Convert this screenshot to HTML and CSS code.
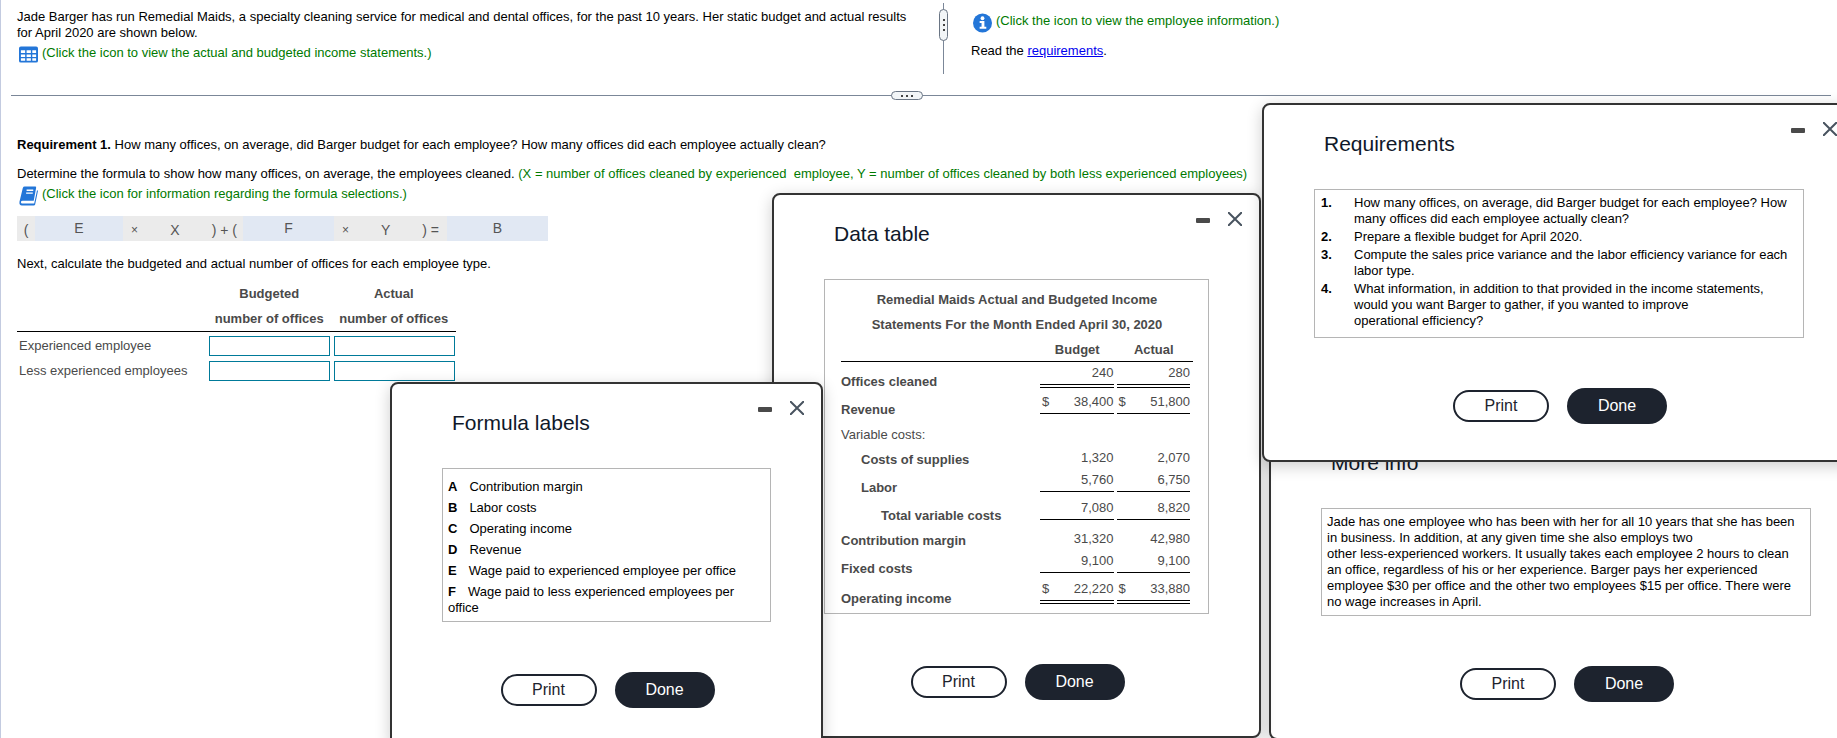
FILE: index.html
```html
<!DOCTYPE html>
<html lang="en">
<head>
  <meta charset="UTF-8">
  <meta name="viewport" content="width=device-width, initial-scale=1.0">
  <title>Remedial Maids</title>
  <link rel="stylesheet" href="styles.css">
</head>

<body>
  <main class="page">
    <section class="intro">
      <div class="intro-left">
        <p>Jade Barger has run Remedial Maids, a specialty cleaning service for medical and dental offices, for the past 10 years. Her static budget and actual results for April 2020 are shown below.</p>
        <div class="icon-line">
          <svg class="icon" viewBox="0 0 20 20">
            <rect x="0" y="1" width="20" height="17" rx="2" fill="#2376d8"/>
            <path fill="#fff" d="M2 5h4.500v3H2zM8 5h4.500v3H8zM14 5h4v3h-4zM2 9.500h4.500v2.500H2zM8 9.500h4.500v2.500H8zM14 9.500h4v2.500h-4zM2 13.500h4.500v2.500H2zM8 13.500h4.500v2.500H8zM14 13.500h4v2.500h-4z"/>
          </svg>
          <span class="green">(Click the icon to view the actual and budgeted income statements.)</span>
        </div>
      </div>
      <div class="divider">
        <span class="handle tall"><i></i><i></i><i></i></span>
      </div>
      <div class="intro-right">
        <div class="icon-line">
          <svg class="icon" viewBox="0 0 20 20">
            <circle cx="10" cy="10" r="10" fill="#2376d8"/>
            <circle cx="10" cy="5" r="2" fill="#fff"/>
            <path fill="#fff" d="M7 8h5v6h2v2H7v-2h2v-4H7z"/>
          </svg>
          <span class="green">(Click the icon to view the employee information.)</span>
        </div>
        <p>Read the <a href="#requirements">requirements</a>.</p>
      </div>
    </section>

    <div class="splitter">
      <span class="handle wide"><i></i><i></i><i></i></span>
    </div>

    <section class="question">
      <p class="lead"><b>Requirement 1.</b> How many offices, on average, did Barger budget for each employee? How many offices did each employee actually clean?</p>
      <p>Determine the formula to show how many offices, on average, the employees cleaned. <span class="green">(X = number of offices cleaned by experienced&nbsp; employee, Y = number of offices cleaned by both less experienced employees)</span></p>
      <div class="icon-line">
        <svg class="icon" viewBox="0 0 20 20">
          <path fill="#2376d8" d="M6 0h11q1.500 0 1 1.500L15.500 15H4q-2 0-2 1.500T3.500 18H16L19 4l1 .5L17 19q-.3 1-1.500 1H3Q0 20 .5 16L4 1.500Q4.500 0 6 0z"/>
          <path stroke="#fff" stroke-width="1.500" d="M8 4h7M7.500 7h7"/>
        </svg>
        <span class="green">(Click the icon for information regarding the formula selections.)</span>
      </div>

      <div class="formula">
        <span class="op paren">(</span>
        <span class="pick pick-e">E</span>
        <span class="op group-x"><span class="times">×</span><span>X</span><span>) + (</span></span>
        <span class="pick pick-f">F</span>
        <span class="op group-y"><span class="times">×</span><span>Y</span><span>) =</span></span>
        <span class="pick pick-b">B</span>
      </div>

      <p>Next, calculate the budgeted and actual number of offices for each employee type.</p>

      <table class="offices">
        <thead>
          <tr>
            <td></td>
            <th>Budgeted<br>number of offices</th>
            <th>Actual<br>number of offices</th>
          </tr>
        </thead>
        <tbody>
          <tr>
            <td>Experienced employee</td>
            <td><input type="text" aria-label="Experienced employee, budgeted"></td>
            <td><input type="text" aria-label="Experienced employee, actual"></td>
          </tr>
          <tr>
            <td>Less experienced employees</td>
            <td><input type="text" aria-label="Less experienced employees, budgeted"></td>
            <td><input type="text" aria-label="Less experienced employees, actual"></td>
          </tr>
        </tbody>
      </table>
    </section>
  </main>

  <!-- More info -->
  <section class="window more-info">
    <header>
      <h2>More info</h2>
      <div class="controls">
        <button class="minimize" aria-label="Minimize"></button>
        <button class="close" aria-label="Close"><svg viewBox="0 0 14 14"><path d="M0 0l14 14M14 0L0 14"/></svg></button>
      </div>
    </header>
    <div class="box info-text">
      Jade has one employee who has been with her for all 10 years that she has been in business. In addition, at any given time she also employs two<br>other less-experienced workers. It usually takes each employee 2 hours to clean an office, regardless of his or her experience. Barger pays her experienced employee $30 per office and the other two employees $15 per office. There were no wage increases in April.
    </div>
    <footer>
      <button class="btn print">Print</button>
      <button class="btn done">Done</button>
    </footer>
  </section>

  <!-- Data table -->
  <section class="window data-table">
    <header>
      <h2>Data table</h2>
      <div class="controls">
        <button class="minimize" aria-label="Minimize"></button>
        <button class="close" aria-label="Close"><svg viewBox="0 0 14 14"><path d="M0 0l14 14M14 0L0 14"/></svg></button>
      </div>
    </header>
    <div class="box table-box">
      <table class="income">
        <caption>Remedial Maids Actual and Budgeted Income<br>Statements For the Month Ended April 30, 2020</caption>
        <thead>
          <tr><td></td><th>Budget</th><th>Actual</th></tr>
        </thead>
        <tbody>
          <tr class="double"><th>Offices cleaned</th><td><div>240</div></td><td><div>280</div></td></tr>
          <tr class="single"><th>Revenue</th><td><div><span>$</span>38,400</div></td><td><div><span>$</span>51,800</div></td></tr>
          <tr><th class="plain">Variable costs:</th><td></td><td></td></tr>
          <tr><th class="indent">Costs of supplies</th><td><div>1,320</div></td><td><div>2,070</div></td></tr>
          <tr class="single"><th class="indent">Labor</th><td><div>5,760</div></td><td><div>6,750</div></td></tr>
          <tr class="single"><th class="indent2">Total variable costs</th><td><div>7,080</div></td><td><div>8,820</div></td></tr>
          <tr><th>Contribution margin</th><td><div>31,320</div></td><td><div>42,980</div></td></tr>
          <tr class="single"><th>Fixed costs</th><td><div>9,100</div></td><td><div>9,100</div></td></tr>
          <tr class="double"><th>Operating income</th><td><div><span>$</span>22,220</div></td><td><div><span>$</span>33,880</div></td></tr>
        </tbody>
      </table>
    </div>
    <footer>
      <button class="btn print">Print</button>
      <button class="btn done">Done</button>
    </footer>
  </section>

  <!-- Formula labels -->
  <section class="window formula-labels">
    <header>
      <h2>Formula labels</h2>
      <div class="controls">
        <button class="minimize" aria-label="Minimize"></button>
        <button class="close" aria-label="Close"><svg viewBox="0 0 14 14"><path d="M0 0l14 14M14 0L0 14"/></svg></button>
      </div>
    </header>
    <div class="box labels-box">
      <p><b>A</b>Contribution margin</p>
      <p><b>B</b>Labor costs</p>
      <p><b>C</b>Operating income</p>
      <p><b>D</b>Revenue</p>
      <p><b>E</b>Wage paid to experienced employee per office</p>
      <p><b>F</b>Wage paid to less experienced employees per office</p>
    </div>
    <footer>
      <button class="btn print">Print</button>
      <button class="btn done">Done</button>
    </footer>
  </section>

  <!-- Requirements -->
  <section class="window requirements" id="requirements">
    <header>
      <h2>Requirements</h2>
      <div class="controls">
        <button class="minimize" aria-label="Minimize"></button>
        <button class="close" aria-label="Close"><svg viewBox="0 0 14 14"><path d="M0 0l14 14M14 0L0 14"/></svg></button>
      </div>
    </header>
    <div class="box req-box">
      <div class="req"><b>1.</b><span>How many offices, on average, did Barger budget for each employee? How many offices did each employee actually clean?</span></div>
      <div class="req"><b>2.</b><span>Prepare a flexible budget for April 2020.</span></div>
      <div class="req"><b>3.</b><span>Compute the sales price variance and the labor efficiency variance for each labor type.</span></div>
      <div class="req"><b>4.</b><span>What information, in addition to that provided in the income statements, would you want Barger to gather, if you wanted to improve<br>operational efficiency?</span></div>
    </div>
    <footer>
      <button class="btn print">Print</button>
      <button class="btn done">Done</button>
    </footer>
  </section>
</body>
</html>
```
FILE: styles.css
```css
* {
  box-sizing: border-box;
}

body {
  margin: 0;
  min-height: 100vh;
  font-family: "Liberation Sans", Arial, sans-serif;
  font-size: 13px;
  line-height: 16px;
  color: #000;
  background: #fff;
  position: relative;
  overflow: hidden;
}

p {
  margin: 0;
}

a {
  color: #0000ee;
}

.green {
  color: #007a00;
}

.page {
  min-height: 100vh;
  border-left: 1px solid #c3cbe0;
}

/* Top section */
.intro {
  display: flex;
  padding-top: 3px;
}

.intro-left {
  width: 937px;
  padding: 6px 20px 0 16px;
}

.icon-line {
  display: flex;
  align-items: flex-start;
  gap: 4px;
}

.icon {
  width: 19px;
  height: 20px;
  flex: none;
}

.intro-left .icon-line {
  padding: 4px 0 0 2px;
}

.divider {
  width: 11px;
  height: 71px;
  display: flex;
  justify-content: center;
  padding-top: 6px;
  background: linear-gradient(#7b8798, #7b8798) center / 1px 100% no-repeat;
}

.handle {
  display: flex;
  align-items: center;
  justify-content: center;
  gap: 3px;
  background: #f2f5f7;
  border: 1px solid #6a7584;
  border-radius: 5px;
}

.handle i {
  width: 2px;
  height: 2px;
  background: #444;
}

.tall {
  flex-direction: column;
  width: 9px;
  height: 32px;
}

.wide {
  width: 32px;
  height: 9px;
}

.intro-right {
  padding: 10px 0 0 22px;
}

.intro-right .icon-line {
  padding-left: 2px;
}

.intro-right p {
  margin-top: 10px;
}

.splitter {
  display: flex;
  align-items: center;
  justify-content: center;
  height: 9px;
  margin: 17px 6px 0 10px;
  padding-right: 28px;
  background: linear-gradient(#7b8798, #7b8798) center / 100% 1px no-repeat;
}

/* Question */
.question {
  padding: 37px 16px 0;
}

.question .lead {
  margin-bottom: 13px;
}

.question .icon-line {
  padding: 4px 0 0 2px;
}

.formula {
  display: flex;
  height: 25px;
  margin: 10px 0 15px;
  color: #555;
  font-size: 14px;
  line-height: 24px;
}

.op {
  display: flex;
  background: #ebebeb;
  padding-top: 2px;
}

.times {
  font-size: 12px;
}

.pick {
  background: #e1e8f3;
  text-align: center;
}

.paren {
  width: 18px;
  justify-content: center;
}

.pick-e {
  width: 88px;
}

.group-x {
  width: 120px;
  justify-content: space-between;
  padding-left: 8px;
  padding-right: 6px;
}

.pick-f {
  width: 91px;
}

.group-y {
  width: 113px;
  justify-content: space-between;
  padding-left: 8px;
  padding-right: 8px;
}

.pick-b {
  width: 101px;
}

.offices {
  width: 439px;
  margin-top: 9px;
  border-collapse: collapse;
  table-layout: fixed;
  color: #4a4a4a;
}

.offices td,
.offices th {
  padding: 0;
}

.offices td:first-child {
  width: 190px;
  padding-left: 2px;
}

.offices th {
  line-height: 25px;
}

.offices thead {
  border-bottom: 1px solid #000;
}

.offices tbody td {
  height: 25px;
  padding-top: 3px;
}

.offices input {
  display: block;
  width: 121px;
  height: 20px;
  margin-left: 2px;
  border: 1px solid #007a99;
  background: #fff;
}

/* Floating windows */
.window {
  position: absolute;
  padding: 0 50px 36px;
  background: #fff;
  border: 2px solid #333;
  border-radius: 8px;
  box-shadow: 0 4px 16px rgba(0, 0, 0, 0.2);
}

.window header {
  display: flex;
  justify-content: space-between;
  height: 84px;
  margin-right: -33px;
}

.window h2 {
  margin: 0;
  padding: 27px 0 0 10px;
  font-size: 21px;
  font-weight: normal;
  line-height: 24px;
  color: #0f1829;
}

.controls {
  display: flex;
  align-items: flex-start;
  gap: 18px;
  padding-top: 17px;
}

.controls button {
  width: 14px;
  height: 14px;
  padding: 0;
  border: none;
  background: none;
}

.controls .minimize {
  height: 5px;
  margin-top: 6px;
  background: #4a4a4a;
  border-radius: 1px;
}

.close svg {
  display: block;
  width: 14px;
  height: 14px;
  stroke: #48535f;
  stroke-width: 2;
}

.box {
  border: 1px solid #b5b5b5;
}

.window footer {
  display: flex;
  align-items: center;
  justify-content: center;
  gap: 18px;
  margin-top: 50px;
  padding-left: 2px;
}

.btn {
  padding: 0;
  font-family: inherit;
  font-size: 16px;
  border-radius: 18px;
}

.print {
  width: 96px;
  height: 32px;
  color: #1d232e;
  background: #fff;
  border: 2px solid #1d232e;
}

.done {
  width: 100px;
  height: 36px;
  color: #fff;
  background: #1d232e;
  border: none;
}

.formula-labels {
  left: 390px;
  top: 382px;
  width: 433px;
}

.data-table {
  left: 772px;
  top: 193px;
  width: 489px;
}

.requirements {
  left: 1262px;
  top: 103px;
  width: 594px;
}

.more-info {
  left: 1269px;
  top: 422px;
  width: 594px;
}

.info-text {
  padding: 5px;
}

.labels-box {
  padding: 5px 20px 0 5px;
}

.labels-box p {
  padding-top: 5px;
}

.labels-box p:last-child {
  padding-bottom: 5px;
}

.labels-box b {
  margin-right: 12px;
}

.req-box {
  padding: 5px 12px 6px 6px;
}

.req {
  display: flex;
  margin-bottom: 2px;
}

.req b {
  flex: none;
  width: 33px;
}

/* Income statement */
.table-box {
  padding: 7px 15px 5px 16px;
}

.income {
  width: 100%;
  border-collapse: collapse;
  color: #4a4a4a;
  table-layout: fixed;
}

.income caption {
  font-weight: bold;
  line-height: 25px;
}

.income td,
.income th {
  padding: 0;
}

.income thead td {
  width: 199px;
}

.income thead th {
  height: 24px;
  padding: 3px 2px 0 0;
  border: none;
}

.income thead {
  border-bottom: 1px solid #000;
}

.income tbody th {
  height: 25px;
  text-align: left;
  vertical-align: bottom;
  line-height: 18px;
}

.income tbody td {
  vertical-align: bottom;
}

.income td div {
  margin-right: 3px;
  padding-left: 2px;
  text-align: right;
  line-height: 22px;
}

.income td span {
  float: left;
}

.income .single th {
  height: 28px;
}

.income .double th {
  height: 30px;
}

.income .single td,
.income .double td {
  vertical-align: top;
}

.income .single div {
  border-bottom: 1px solid #000;
}

.income .double div {
  border-bottom: 4px double #000;
}

.income .plain {
  font-weight: normal;
}

.income .indent {
  padding-left: 20px;
}

.income .indent2 {
  padding-left: 40px;
}
```
